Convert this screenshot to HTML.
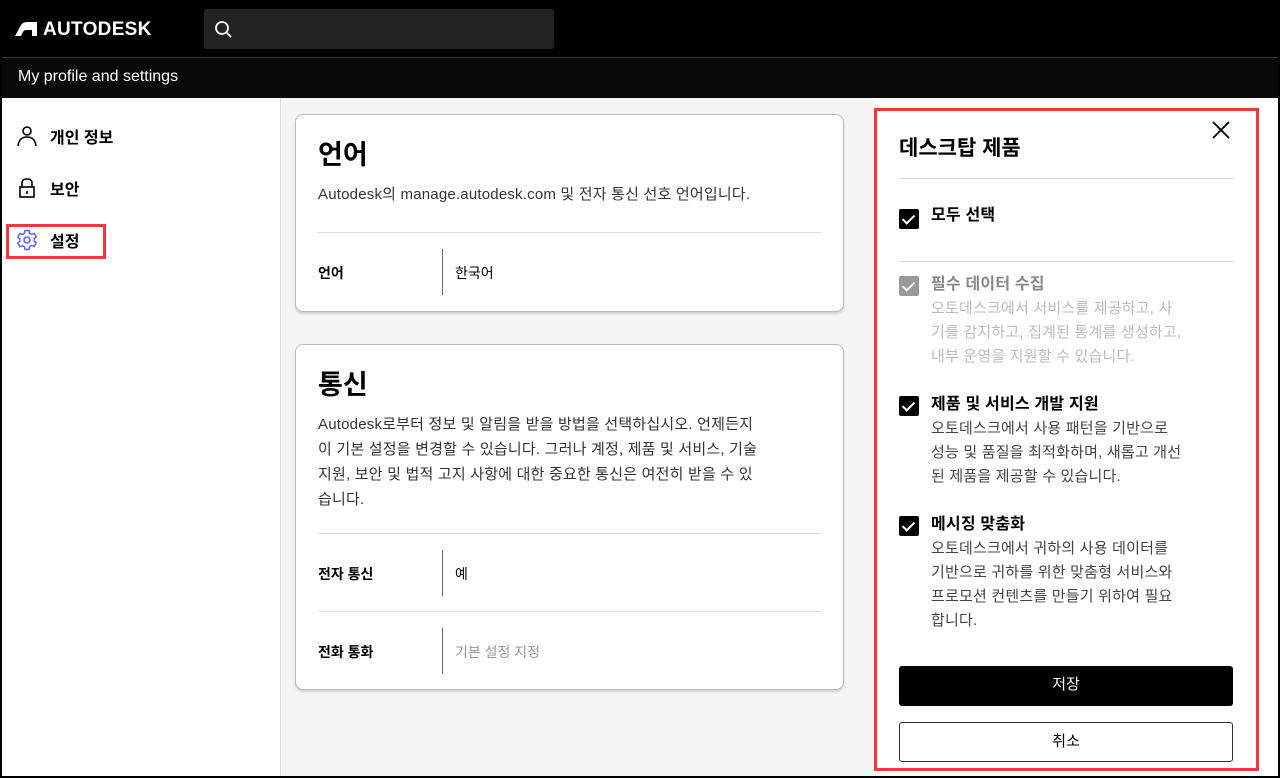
<!DOCTYPE html>
<html><head><meta charset="utf-8"><style>
*{box-sizing:border-box;margin:0;padding:0}
body{width:1280px;height:778px;background:#000;font-family:"Liberation Sans","Noto Sans CJK KR",sans-serif;position:relative;overflow:hidden;color:#000}
.top{position:absolute;left:0;top:0;width:1280px;height:56px;background:#000}
.logo{position:absolute;left:15px;top:19px;color:#fff;font-weight:bold;font-size:19px;letter-spacing:0.3px}
.search{position:absolute;left:204px;top:9px;width:350px;height:40px;background:#222;border-radius:3px}
.bar2{position:absolute;left:2px;top:57px;width:1276px;height:41px;background:#0a0a0a;color:#fff;font-size:16px;padding:10px 0 0 16px;border-top:1px solid #333}
.nav{position:absolute;left:2px;top:98px;width:279px;height:678px;background:#fff;border-right:1px solid #ddd}
.nav .it{position:absolute;left:14px;font-size:16px;font-weight:bold;display:flex;align-items:center;gap:12px}
.main{position:absolute;left:281px;top:98px;width:592px;height:678px;background:#f5f5f5}
.card{position:absolute;left:14px;width:549px;background:#fff;border:1px solid #bbb;border-radius:8px;box-shadow:0 2px 2px rgba(0,0,0,.15);padding:0 22px}
.card h2{font-size:27px;margin-top:18px;font-weight:bold}
.card p{font-size:15px;line-height:25px;color:#333;margin-top:12px;white-space:nowrap;letter-spacing:0.2px}
.row{border-top:1px solid #ddd;height:78px;position:relative;font-size:14px}
.row .l{position:absolute;left:0;top:30px;font-weight:bold}
.row .v{position:absolute;left:124px;top:16px;height:46px;border-left:1px solid #666;padding:14px 0 0 12px}
.panel{position:absolute;left:873px;top:98px;width:405px;height:678px;background:#fff}
.red{position:absolute;border:3px solid #f0393f}
.chk{position:absolute;width:20px;height:20px;background:#000;border-radius:2px}
.chk:after{content:"";position:absolute;left:6px;top:3px;width:5px;height:10px;border:solid #fff;border-width:0 2px 2px 0;transform:rotate(45deg)}
.opt{position:absolute;left:58px;font-size:15px;line-height:24px;color:#444;letter-spacing:0.2px}
.opt b{color:#000;display:block;font-size:16px}
.btn{position:absolute;left:26px;width:334px;height:40px;font-size:15px;text-align:center;line-height:38px;border-radius:3px}
</style></head><body>
<div class="top">
<div class="logo"><svg width="22" height="14" viewBox="0 0 22 14" style="margin-right:6px;vertical-align:-1px"><path d="M0 14 L6 3 Q8 0 12 0 L22 0 L22 14 L17 14 L17 8 L11 8 Q9 8 8 10 L6 14Z" fill="#fff"/></svg>AUTODESK</div>
<div class="search"><svg width="20" height="20" viewBox="0 0 20 20" style="position:absolute;left:10px;top:11px"><circle cx="8" cy="8" r="6" fill="none" stroke="#fff" stroke-width="1.8"/><path d="M12.5 12.5 L17 17" stroke="#fff" stroke-width="1.8"/></svg></div>
</div>
<div class="bar2">My profile and settings</div>
<div class="nav">
<div class="it" style="top:26px"><svg width="22" height="22" viewBox="0 0 22 22"><circle cx="11" cy="6" r="4" fill="none" stroke="#000" stroke-width="1.6"/><path d="M2 21 Q3 12 11 12 Q19 12 20 21" fill="none" stroke="#000" stroke-width="1.6"/></svg>개인 정보</div>
<div class="it" style="top:78px"><svg width="22" height="22" viewBox="0 0 22 22"><path d="M6 10 V6 Q6 2 11 2 Q16 2 16 6 V10" fill="none" stroke="#000" stroke-width="1.6"/><rect x="4" y="10" width="14" height="10" fill="none" stroke="#000" stroke-width="1.6"/><path d="M11 14 V17" stroke="#000" stroke-width="1.6"/></svg>보안</div>
<div class="it" style="top:130px"><svg width="22" height="22" viewBox="0 0 22 22"><circle cx="11" cy="11" r="3" fill="none" stroke="#5f60ff" stroke-width="1.6"/><path d="M9 1.5h4l.6 2.7 2 1.1 2.6-.9 2 3.4-2 1.9v2.3l2 1.9-2 3.4-2.6-.9-2 1.1L13 20.5H9l-.6-2.7-2-1.1-2.6.9-2-3.4 2-1.9V9.9l-2-1.9 2-3.4 2.6.9 2-1.1z" fill="none" stroke="#5f60ff" stroke-width="1.5"/></svg>설정</div>
</div>
<div class="red" style="left:6px;top:224px;width:100px;height:35px"></div>
<div class="main">
<div class="card" style="top:16px;height:198px"><h2>언어</h2><p style="margin-bottom:25px;margin-top:10px">Autodesk의 manage.autodesk.com 및 전자 통신 선호 언어입니다.</p>
<div class="row"><span class="l">언어</span><span class="v">한국어</span></div></div>
<div class="card" style="top:246px;height:346px"><h2>통신</h2><p style="margin-bottom:21px;margin-top:10px">Autodesk로부터 정보 및 알림을 받을 방법을 선택하십시오. 언제든지<br>이 기본 설정을 변경할 수 있습니다. 그러나 계정, 제품 및 서비스, 기술<br>지원, 보안 및 법적 고지 사항에 대한 중요한 통신은 여전히 받을 수 있<br>습니다.</p>
<div class="row"><span class="l">전자 통신</span><span class="v">예</span></div>
<div class="row"><span class="l">전화 통화</span><span class="v" style="color:#999">기본 설정 지정</span></div></div>
</div>
<div class="panel">
<div style="position:absolute;left:26px;top:34px;font-size:21px;font-weight:bold">데스크탑 제품</div>
<svg width="20" height="20" viewBox="0 0 20 20" style="position:absolute;left:338px;top:22px"><path d="M2 2L18 18M18 2L2 18" stroke="#000" stroke-width="1.8"/></svg>
<div style="position:absolute;left:26px;top:80px;width:334px;border-top:1px solid #ddd"></div>
<div class="chk" style="left:26px;top:111px"></div><div class="opt" style="top:106px"><b>모두 선택</b></div>
<div style="position:absolute;left:26px;top:163px;width:334px;border-top:1px solid #ddd"></div>
<div class="chk" style="left:26px;top:178px;background:#999"></div><div class="opt" style="top:175px;color:#bbb"><b style="color:#888">필수 데이터 수집</b>오토데스크에서 서비스를 제공하고, 사<br>기를 감지하고, 집계된 통계를 생성하고,<br>내부 운영을 지원할 수 있습니다.</div>
<div class="chk" style="left:26px;top:298px"></div><div class="opt" style="top:295px"><b>제품 및 서비스 개발 지원</b>오토데스크에서 사용 패턴을 기반으로<br>성능 및 품질을 최적화하며, 새롭고 개선<br>된 제품을 제공할 수 있습니다.</div>
<div class="chk" style="left:26px;top:418px"></div><div class="opt" style="top:415px"><b>메시징 맞춤화</b>오토데스크에서 귀하의 사용 데이터를<br>기반으로 귀하를 위한 맞춤형 서비스와<br>프로모션 컨텐츠를 만들기 위하여 필요<br>합니다.</div>
<div class="btn" style="top:568px;background:#000;color:#fff">저장</div>
<div class="btn" style="top:624px;border:1px solid #333">취소</div>
</div>
<div class="red" style="left:874px;top:108px;width:385px;height:663px"></div>
</body></html>
